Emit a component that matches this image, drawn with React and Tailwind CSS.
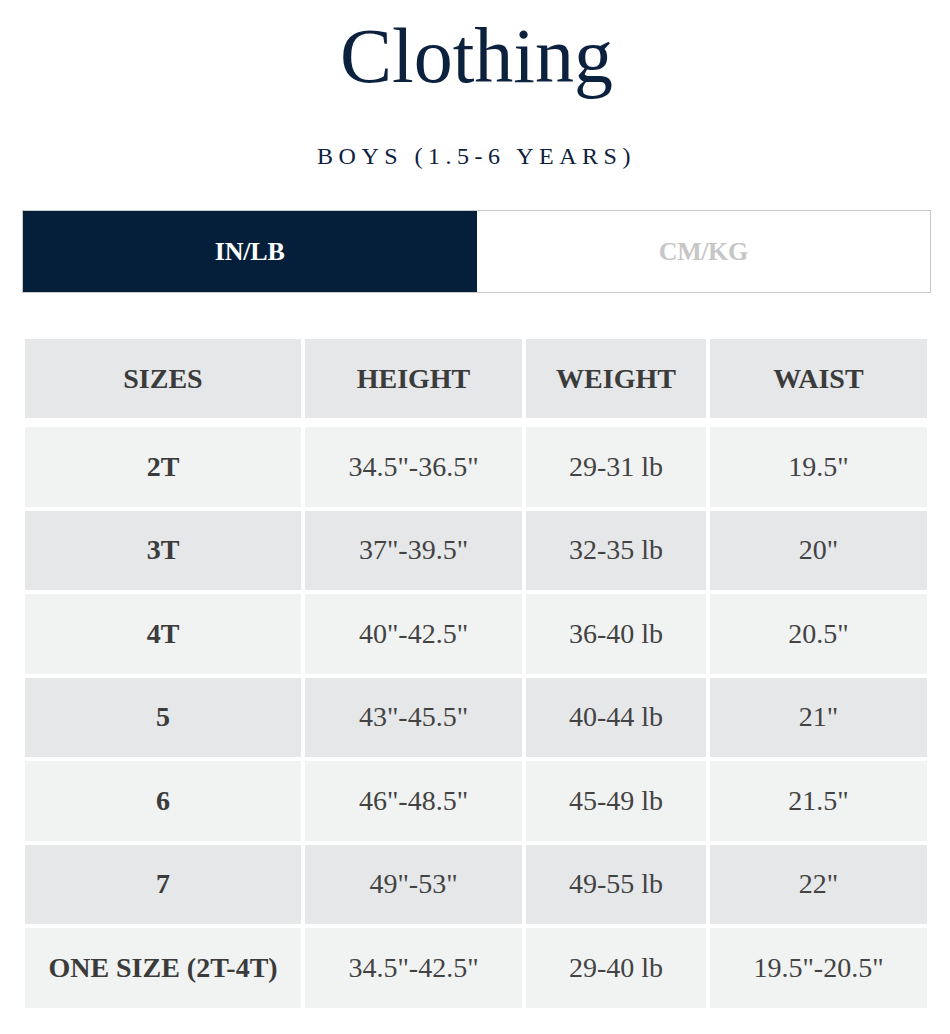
const rows = [
  { size: '2T', height: '34.5"-36.5"', weight: '29-31 lb', waist: '19.5"' },
  { size: '3T', height: '37"-39.5"', weight: '32-35 lb', waist: '20"' },
  { size: '4T', height: '40"-42.5"', weight: '36-40 lb', waist: '20.5"' },
  { size: '5', height: '43"-45.5"', weight: '40-44 lb', waist: '21"' },
  { size: '6', height: '46"-48.5"', weight: '45-49 lb', waist: '21.5"' },
  { size: '7', height: '49"-53"', weight: '49-55 lb', waist: '22"' },
  { size: 'ONE SIZE (2T-4T)', height: '34.5"-42.5"', weight: '29-40 lb', waist: '19.5"-20.5"' },
];

const cols = 'grid grid-cols-[276px_217px_180px_217px] gap-x-[4px]';

const App = () => {
  return (
    <div className="bg-white min-h-screen font-['Liberation_Serif',serif]">
      <div className="ml-[22px] w-[909px] pt-[17px]">
        <h1 className="text-center text-[78px] leading-none text-[#0c213d]">Clothing</h1>
        <h2 className="mt-[49px] text-center text-[24px] leading-none tracking-[5.5px] text-[#0c213d]">
          BOYS (1.5-6 YEARS)
        </h2>

        {/* unit toggle */}
        <div className="mt-[42px] flex h-[83px] border border-[#c9c9c9]">
          <button className="flex-1 bg-[#051f3b] text-white text-[26px] font-bold tracking-[-0.2px]">IN/LB</button>
          <button className="flex-1 bg-white text-[#c6c6c6] text-[26px] font-bold tracking-[-0.4px]">CM/KG</button>
        </div>

        {/* size table */}
        <div className="mt-[46px] px-[3px]">
          <div className={`${cols} h-[79px] text-[28px] font-bold text-[#3b3b3b]`}>
            {['SIZES', 'HEIGHT', 'WEIGHT', 'WAIST'].map((h) => (
              <div key={h} className="flex items-center justify-center bg-[#e6e7e9]">
                {h}
              </div>
            ))}
          </div>
          <div className="mt-[9px] flex flex-col gap-y-[4px] text-[28px] text-[#434343]">
            {rows.map((r, i) => {
              const bg = i % 2 === 0 ? 'bg-[#f1f2f2]' : 'bg-[#e6e7e9]';
              return (
                <div key={r.size} className={`${cols} h-[79.5px]`}>
                  <div className={`${bg} flex items-center justify-center font-bold text-[#3b3b3b]`}>{r.size}</div>
                  <div className={`${bg} flex items-center justify-center`}>{r.height}</div>
                  <div className={`${bg} flex items-center justify-center`}>{r.weight}</div>
                  <div className={`${bg} flex items-center justify-center`}>{r.waist}</div>
                </div>
              );
            })}
          </div>
        </div>
      </div>
    </div>
  );
};

export default App;
